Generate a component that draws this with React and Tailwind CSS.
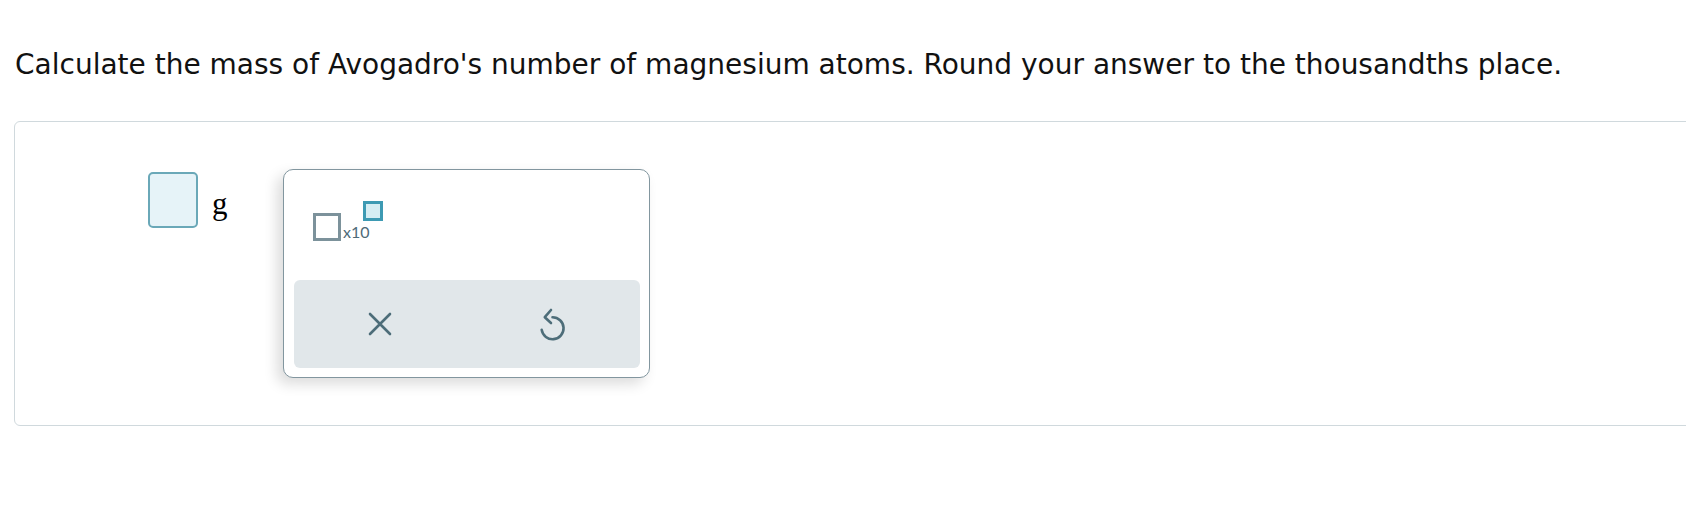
import React from "react";

function XIcon() {
  return (
    <svg width="24" height="24" viewBox="0 0 24 24" fill="none">
      <path d="M2 2 L22 22 M22 2 L2 22" stroke="#4d6d79" strokeWidth="2.6" strokeLinecap="round" />
    </svg>
  );
}

function UndoIcon() {
  return (
    <svg width="28" height="34" viewBox="0 0 28 34" fill="none">
      <path d="M13.5 10.2 A11 11 0 1 1 2.7 22.9" stroke="#4d6d79" strokeWidth="2.6" strokeLinecap="round" />
      <path d="M12 3 L5.8 10.2 L12 16" stroke="#4d6d79" strokeWidth="2.6" strokeLinecap="round" strokeLinejoin="round" />
    </svg>
  );
}

export default function App() {
  return (
    <div className="w-[1686px] h-[516px] bg-white overflow-hidden">
      <p className="pl-[15px] pt-[49px] text-[28px] leading-[32px] text-[#111] font-['DejaVu_Sans',sans-serif] whitespace-nowrap">
        Calculate the mass of Avogadro's number of magnesium atoms. Round your answer to the thousandths place.
      </p>
      <div className="ml-[14px] mt-[40px] w-[1720px] h-[305px] border-[1.5px] border-[#d0d9dd] rounded-[6px] flex items-start pt-[47px] pl-[133px]">
        <div className="mt-[3px] w-[50px] h-[56px] border-2 border-[#6aa8b8] bg-[#e6f3f8] rounded-[5px]" />
        <div className="w-[85px] pl-[14px] mt-[20px] text-[31px] leading-[30px] text-black font-['Liberation_Serif',serif]">g</div>
        <div className="w-[367px] h-[209px] border-[1.5px] border-[#82969f] rounded-[10px] bg-white flex flex-col shadow-[-6px_6px_14px_rgba(0,0,0,0.14)]">
          <div className="flex-1 pl-[29px] pt-[31px]">
            <div className="flex items-start">
              <div className="mt-[12px] w-[28px] h-[28px] border-[3px] border-[#7c929b]" />
              <span className="mt-[23px] ml-[2px] text-[16px] leading-[16px] text-[#4e6a77] font-['Lato',sans-serif]">x10</span>
              <div className="ml-[-7px] w-[20px] h-[20px] border-[3px] border-[#3d9ab3] bg-[#d5edf3]" />
            </div>
          </div>
          <div className="mx-[9.5px] mb-[9.5px] h-[88px] rounded-[6px] bg-[#e1e7ea] grid grid-cols-2">
            <div className="flex items-center justify-center">
              <XIcon />
            </div>
            <div className="flex items-center justify-center">
              <UndoIcon />
            </div>
          </div>
        </div>
      </div>
    </div>
  );
}
